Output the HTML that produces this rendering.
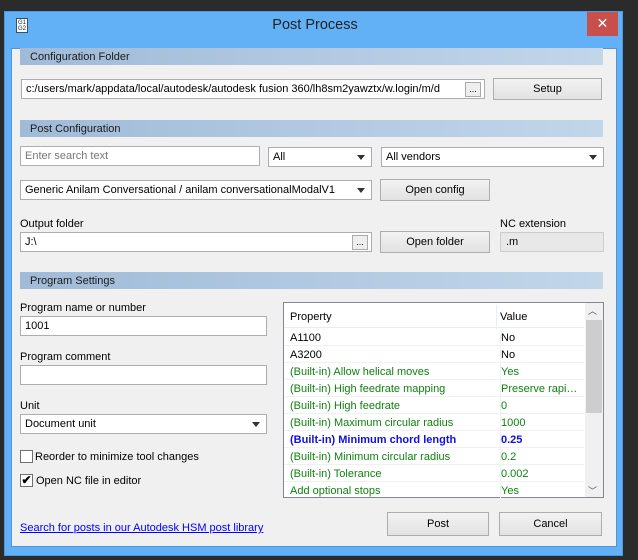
<!DOCTYPE html><html><head><meta charset="utf-8"><style>
*{box-sizing:border-box;margin:0;padding:0}
body{width:638px;height:560px;background:#2b2b2b;position:relative;overflow:hidden;font-family:"Liberation Sans",sans-serif;font-size:11px;color:#000}
.a{position:absolute}
.win{left:4px;top:11px;width:619px;height:545px;background:#62b0f6;border:1px solid #4a9ae0}
.client{left:11px;top:48px;width:606px;height:499px;background:#f0f0f0;border:1px solid #4f96d8}
.hdr{height:17px;background:linear-gradient(90deg,#a0bbd8,#c2d6ea);padding-left:10px;line-height:19px;font-size:11px;color:#1a1a1a}
.inp{background:#fff;border:1px solid #abadb3;height:20px;line-height:19px;padding-left:4px;white-space:nowrap;overflow:hidden}
.btn{background:linear-gradient(#f2f2f2,#e2e2e2);border:1px solid #adadad;height:22px;line-height:21px;text-align:center}
.sel{background:#fff;border:1px solid #abadb3;height:20px;line-height:19px;padding-left:4px;white-space:nowrap;overflow:hidden}
.sel:after{content:"";position:absolute;right:6px;top:7px;border:4px solid transparent;border-top:5px solid #333;border-bottom:0;width:0}
.tbl{left:283px;top:302px;width:321px;height:196px;background:#fff;border:1px solid #828790}
.row{position:absolute;left:0;width:300px;height:17px;border-bottom:1px solid #f0f0f0;line-height:18px}
.row span{position:absolute}
.row .p{left:6px}.row .v{left:216px;border-left:1px solid #f0f0f0;padding-left:0}
.g{color:#108010}.b{color:#1010e0;font-weight:bold}
.cb{width:13px;height:13px;border:1px solid #707070;background:#fff}
.l{line-height:14px}
</style></head><body>
<div class="a win"></div>
<div class="a" style="left:16px;top:18px;width:12px;height:15px;background:#fff;border:1px solid #355;font-size:6px;line-height:6px;color:#124;text-align:center;padding-top:1px">G1<br>G2</div>
<div class="a" style="left:0;top:17px;width:630px;text-align:center;font-size:14.5px;color:#222">Post Process</div>
<div class="a" style="left:587px;top:12px;width:31px;height:24px;background:#c7504c;color:#fff;text-align:center;line-height:23px;font-size:14px">✕</div>
<div class="a client"></div>
<div class="a hdr" style="left:20px;top:48px;width:583px">Configuration Folder</div>
<div class="a inp" style="left:21px;top:79px;width:464px">c:/users/mark/appdata/local/autodesk/autodesk fusion 360/lh8sm2yawztx/w.login/m/d</div>
<div class="a" style="left:465px;top:82px;width:16px;height:15px;border:1px solid #aaa;background:#eee;font-size:9px;text-align:center;line-height:13px">...</div>
<div class="a btn" style="left:493px;top:78px;width:109px">Setup</div>
<div class="a hdr" style="left:20px;top:120px;width:583px">Post Configuration</div>
<div class="a inp" style="left:20px;top:146px;width:240px;color:#777">Enter search text</div>
<div class="a sel" style="left:268px;top:147px;width:104px">All</div>
<div class="a sel" style="left:381px;top:147px;width:223px">All vendors</div>
<div class="a sel" style="left:20px;top:180px;width:352px">Generic Anilam Conversational / anilam conversationalModalV1</div>
<div class="a btn" style="left:380px;top:179px;width:110px">Open config</div>
<div class="a l" style="left:20px;top:217px">Output folder</div>
<div class="a l" style="left:500px;top:217px">NC extension</div>
<div class="a inp" style="left:20px;top:232px;width:352px">J:\</div>
<div class="a" style="left:352px;top:235px;width:16px;height:15px;border:1px solid #aaa;background:#eee;font-size:9px;text-align:center;line-height:13px">...</div>
<div class="a btn" style="left:380px;top:231px;width:110px">Open folder</div>
<div class="a" style="left:500px;top:232px;width:104px;height:20px;border:1px solid #ccc;background:#e8e8e8;line-height:19px;padding-left:5px">.m</div>
<div class="a hdr" style="left:20px;top:272px;width:583px">Program Settings</div>
<div class="a l" style="left:20px;top:301px">Program name or number</div>
<div class="a inp" style="left:20px;top:316px;width:247px">1001</div>
<div class="a l" style="left:20px;top:350px">Program comment</div>
<div class="a inp" style="left:20px;top:365px;width:247px"></div>
<div class="a l" style="left:20px;top:399px">Unit</div>
<div class="a sel" style="left:20px;top:414px;width:247px">Document unit</div>
<div class="a cb" style="left:20px;top:450px"></div>
<div class="a l" style="left:35px;top:450px">Reorder to minimize tool changes</div>
<div class="a cb" style="left:20px;top:474px;font-size:12px;line-height:11px;text-align:center;font-weight:bold">✔</div>
<div class="a l" style="left:36px;top:474px">Open NC file in editor</div>
<div class="a l" style="left:20px;top:521px;color:#00f;text-decoration:underline">Search for posts in our Autodesk HSM post library</div>
<div class="a tbl">
<div class="row" style="top:2px;height:23px;line-height:24px;background:#fff;border-bottom:1px solid #e5eef8"><span class="p">Property</span><span class="v" style="border-left:1px solid #e5eef8;padding-left:3px;left:212px">Value</span></div>
<div class="row" style="top:26px"><span class="p">A1100</span><span class="v">No</span></div>
<div class="row" style="top:43px"><span class="p">A3200</span><span class="v">No</span></div>
<div class="row g" style="top:60px"><span class="p">(Built-in) Allow helical moves</span><span class="v">Yes</span></div>
<div class="row g" style="top:77px"><span class="p">(Built-in) High feedrate mapping</span><span class="v">Preserve rapi…</span></div>
<div class="row g" style="top:94px"><span class="p">(Built-in) High feedrate</span><span class="v">0</span></div>
<div class="row g" style="top:111px"><span class="p">(Built-in) Maximum circular radius</span><span class="v">1000</span></div>
<div class="row b" style="top:128px"><span class="p">(Built-in) Minimum chord length</span><span class="v">0.25</span></div>
<div class="row g" style="top:145px"><span class="p">(Built-in) Minimum circular radius</span><span class="v">0.2</span></div>
<div class="row g" style="top:162px"><span class="p">(Built-in) Tolerance</span><span class="v">0.002</span></div>
<div class="row g" style="top:179px;border:0"><span class="p">Add optional stops</span><span class="v">Yes</span></div>
<div class="a" style="left:301px;top:0;width:18px;height:194px;background:#f0f0f0"></div>
<div class="a" style="left:302px;top:17px;width:16px;height:93px;background:#cdcdcd"></div>
<div class="a" style="left:304px;top:1px;font-size:9px;color:#555">︿</div>
<div class="a" style="left:304px;top:181px;font-size:9px;color:#555">﹀</div>
</div>
<div class="a btn" style="left:387px;top:512px;width:102px;height:24px;line-height:23px">Post</div>
<div class="a btn" style="left:499px;top:512px;width:103px;height:24px;line-height:23px">Cancel</div>
</body></html>
